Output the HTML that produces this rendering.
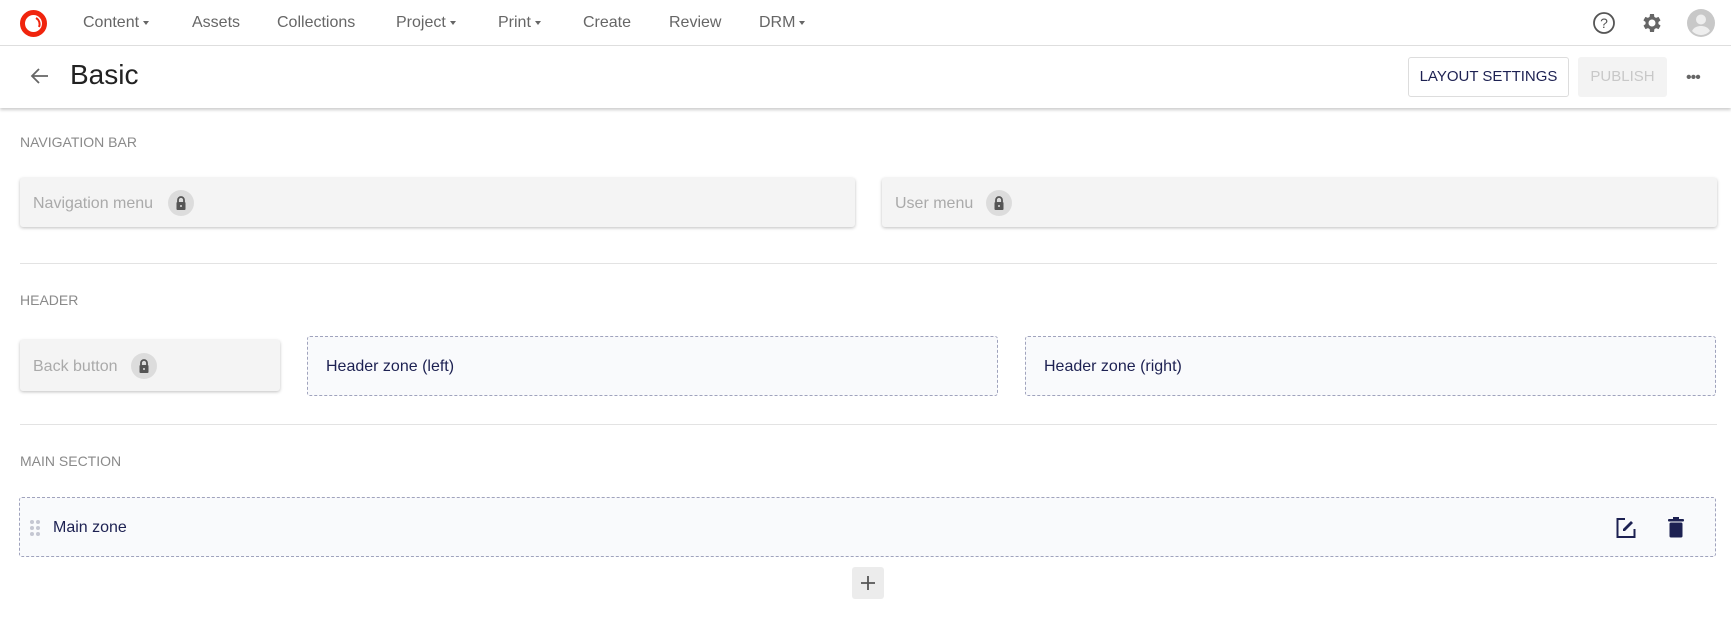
<!DOCTYPE html>
<html><head><meta charset="utf-8"><style>
*{box-sizing:border-box;margin:0;padding:0}
body{width:1731px;height:627px;overflow:hidden;background:#fff;font-family:"Liberation Sans",sans-serif;position:relative}
.a{position:absolute}
.nav{left:0;top:0;width:1731px;height:46px;border-bottom:1px solid #e0e0e0}
.ni{position:absolute;top:14px;font-size:16px;color:#666}
.car{display:inline-block;border-left:3.5px solid transparent;border-right:3.5px solid transparent;border-top:4px solid #666;vertical-align:middle;margin-left:4px}
.hdr{left:0;top:46px;width:1731px;height:62px;box-shadow:0 2px 3px rgba(0,0,0,.2)}
.lbl{font-size:14px;color:#8a8a8a;left:20px}
.lock{position:absolute;left:0;top:0;width:26px;height:26px;border-radius:50%;background:#dcdcdc}
.lk{background:#f4f4f4;border-radius:3px;box-shadow:0 1px 3px rgba(0,0,0,.25);font-size:16px;color:#aaa}
.lk span{position:absolute;left:13px;top:17px}
.zn{background:#f9fafc;border:1px dashed #a0a3bd;border-radius:3px;font-size:16px;color:#1d2152}
.div{left:20px;width:1697px;height:1px;background:#e3e3e3}
</style></head><body>
<div class="a nav">
<svg class="a" style="left:19px;top:9px" width="29" height="29" viewBox="0 0 29 29"><circle cx="14.5" cy="14.5" r="11" fill="none" stroke="#f0240d" stroke-width="5"/><path d="M17 9 A7 7 0 0 1 20 18" stroke="#f0240d" stroke-width="2" fill="none"/></svg>
<div class="ni" style="left:83px">Content<span class="car"></span></div>
<div class="ni" style="left:192px">Assets</div>
<div class="ni" style="left:277px">Collections</div>
<div class="ni" style="left:396px">Project<span class="car"></span></div>
<div class="ni" style="left:498px">Print<span class="car"></span></div>
<div class="ni" style="left:583px">Create</div>
<div class="ni" style="left:669px">Review</div>
<div class="ni" style="left:759px">DRM<span class="car"></span></div>
<svg class="a" style="left:1592px;top:11px" width="24" height="24" viewBox="0 0 24 24"><circle cx="12" cy="12" r="10" fill="none" stroke="#555" stroke-width="1.8"/><text x="12" y="17" text-anchor="middle" font-size="14" fill="#555" font-family="Liberation Sans">?</text></svg>
<svg class="a" style="left:1640px;top:11px" width="24" height="24" viewBox="0 0 24 24"><path fill="#666" d="M19.4 13a7.5 7.5 0 0 0 0-2l2.1-1.6-2-3.5-2.5 1a7 7 0 0 0-1.7-1L15 3h-4l-.4 2.9a7 7 0 0 0-1.7 1l-2.5-1-2 3.5L6.6 11a7.5 7.5 0 0 0 0 2l-2.1 1.6 2 3.5 2.5-1a7 7 0 0 0 1.7 1L11 21h4l.4-2.9a7 7 0 0 0 1.7-1l2.5 1 2-3.5zM13 15.5a3.5 3.5 0 1 1 0-7 3.5 3.5 0 0 1 0 7z" transform="translate(-1 0)"/></svg>
<svg class="a" style="left:1687px;top:9px" width="28" height="28" viewBox="0 0 28 28"><circle cx="14" cy="14" r="14" fill="#c8c8c8"/><circle cx="14" cy="10.5" r="5" fill="#eee"/><path d="M5 22c2-4 6-5 9-5s7 1 9 5a12 12 0 0 1-18 0z" fill="#eee"/></svg>
</div>
<div class="a hdr">
<svg class="a" style="left:30px;top:20px" width="20" height="20" viewBox="0 0 20 20"><path d="M18 10H3M9 3l-7 7 7 7" stroke="#666" stroke-width="1.8" fill="none"/></svg>
<div class="a" style="left:70px;top:13px;font-size:28px;color:#222">Basic</div>
<div class="a" style="left:1408px;top:11px;width:161px;height:40px;border:1px solid #ddd;border-radius:3px;font-size:15px;color:#1d2152;text-align:center;line-height:38px">LAYOUT SETTINGS</div>
<div class="a" style="left:1578px;top:11px;width:89px;height:40px;background:#f3f3f3;border-radius:3px;font-size:15px;color:#c8c8c8;text-align:center;line-height:40px">PUBLISH</div>
<div class="a" style="left:1686px;top:23px;font-size:16px;color:#666;letter-spacing:-1px">•••</div>
</div>
<div class="a lbl" style="top:134px">NAVIGATION BAR</div>
<div class="a lk" style="left:20px;top:178px;width:835px;height:49px"><span>Navigation menu</span><div class="lock" style="left:148px;top:12px"><svg width="26" height="26" viewBox="0 0 26 26"><path d="M10 12V10a3 3 0 0 1 6 0v2" stroke="#555" stroke-width="1.8" fill="none"/><rect x="8.5" y="12" width="9" height="8" rx="1" fill="#555"/><circle cx="13" cy="16" r="1" fill="#ddd"/></svg></div></div>
<div class="a lk" style="left:882px;top:178px;width:835px;height:49px"><span>User menu</span><div class="lock" style="left:104px;top:12px"><svg width="26" height="26" viewBox="0 0 26 26"><path d="M10 12V10a3 3 0 0 1 6 0v2" stroke="#555" stroke-width="1.8" fill="none"/><rect x="8.5" y="12" width="9" height="8" rx="1" fill="#555"/><circle cx="13" cy="16" r="1" fill="#ddd"/></svg></div></div>
<div class="a div" style="top:263px"></div>
<div class="a lbl" style="top:292px">HEADER</div>
<div class="a lk" style="left:20px;top:340px;width:260px;height:51px"><span style="top:18px">Back button</span><div class="lock" style="left:111px;top:13px"><svg width="26" height="26" viewBox="0 0 26 26"><path d="M10 12V10a3 3 0 0 1 6 0v2" stroke="#555" stroke-width="1.8" fill="none"/><rect x="8.5" y="12" width="9" height="8" rx="1" fill="#555"/><circle cx="13" cy="16" r="1" fill="#ddd"/></svg></div></div>
<div class="a zn" style="left:307px;top:336px;width:691px;height:60px;padding:21px 0 0 18px">Header zone (left)</div>
<div class="a zn" style="left:1025px;top:336px;width:691px;height:60px;padding:21px 0 0 18px">Header zone (right)</div>
<div class="a div" style="top:424px"></div>
<div class="a lbl" style="top:453px">MAIN SECTION</div>
<div class="a zn" style="left:19px;top:497px;width:1697px;height:60px">
<svg class="a" style="left:9px;top:21px" width="12" height="18" viewBox="0 0 12 18"><g fill="#c5c7d2"><circle cx="3" cy="3" r="2"/><circle cx="9" cy="3" r="2"/><circle cx="3" cy="9" r="2"/><circle cx="9" cy="9" r="2"/><circle cx="3" cy="15" r="2"/><circle cx="9" cy="15" r="2"/></g></svg>
<div class="a" style="left:33px;top:21px">Main zone</div>
<svg class="a" style="left:1595px;top:19px" width="22" height="22" viewBox="0 0 22 22"><path d="M10 2H2.5v18h17v-8" stroke="#1d2152" stroke-width="2" fill="none"/><path d="M8 12l8-8 2 2-8 8H8z" fill="#1d2152"/></svg>
<svg class="a" style="left:1647px;top:19px" width="18" height="22" viewBox="0 0 18 22"><rect x="1" y="2" width="16" height="2.5" rx="1" fill="#1d2152"/><rect x="6" y="0" width="6" height="3" fill="#1d2152"/><rect x="2.5" y="5.5" width="13" height="15" rx="1.5" fill="#1d2152"/></svg>
</div>
<div class="a" style="left:852px;top:567px;width:32px;height:32px;background:#ececec;border-radius:3px"><svg width="32" height="32" viewBox="0 0 32 32"><path d="M16 9v14M9 16h14" stroke="#555" stroke-width="1.8"/></svg></div>
</body></html>
